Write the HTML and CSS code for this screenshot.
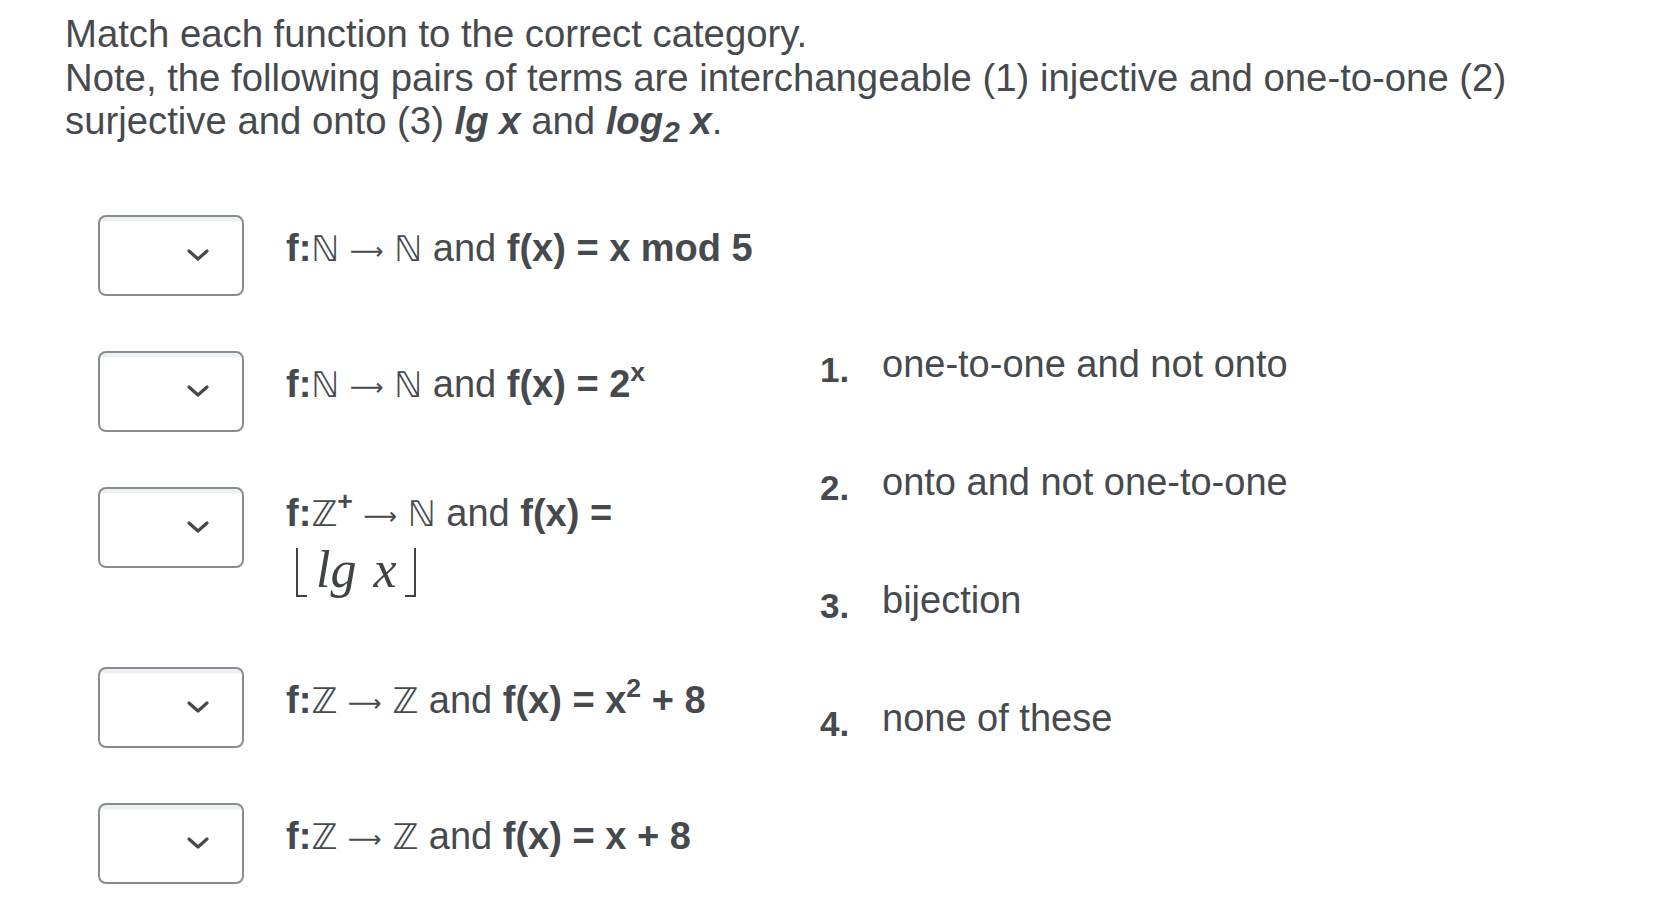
FILE: index.html
```html
<!DOCTYPE html>
<html lang="en">
<head>
<meta charset="utf-8">
<title>Match functions</title>
<link rel="stylesheet" href="styles.css">
</head>
<body>
<div class="page">
  <div class="prompt">
    <p>Match each function to the correct category.</p>
    <p>Note, the following pairs of terms are interchangeable (1) injective and one-to-one (2) surjective and onto (3) <b><i>lg x</i></b> and <b><i>log<sub>2</sub> x</i></b>.</p>
  </div>
  <div class="matching">
    <div class="questions">
      <div class="row">
        <div class="select"><svg class="chev" viewBox="0 0 22 12"><path d="M2 2 L11 10 L20 2" /></svg></div>
        <div class="fn"><b>f:</b><span class="ds">ℕ</span> <span class="arr">⟶</span> <span class="ds">ℕ</span> and <b>f(x) = x mod 5</b></div>
      </div>
      <div class="row">
        <div class="select"><svg class="chev" viewBox="0 0 22 12"><path d="M2 2 L11 10 L20 2" /></svg></div>
        <div class="fn"><b>f:</b><span class="ds">ℕ</span> <span class="arr">⟶</span> <span class="ds">ℕ</span> and <b>f(x) = 2<sup>x</sup></b></div>
      </div>
      <div class="row row-tall">
        <div class="select"><svg class="chev" viewBox="0 0 22 12"><path d="M2 2 L11 10 L20 2" /></svg></div>
        <div class="fn fn-wrap"><b>f:</b><span class="ds">ℤ</span><b class="sup">+</b> <span class="arr">⟶</span> <span class="ds">ℕ</span> and <b>f(x) =</b><br><span class="math"><span class="floor"><span class="expr"><i>lg</i> <i>x</i></span></span></span></div>
      </div>
      <div class="row">
        <div class="select"><svg class="chev" viewBox="0 0 22 12"><path d="M2 2 L11 10 L20 2" /></svg></div>
        <div class="fn"><b>f:</b><span class="ds">ℤ</span> <span class="arr">⟶</span> <span class="ds">ℤ</span> and <b>f(x) = x<sup>2</sup> + 8</b></div>
      </div>
      <div class="row">
        <div class="select"><svg class="chev" viewBox="0 0 22 12"><path d="M2 2 L11 10 L20 2" /></svg></div>
        <div class="fn"><b>f:</b><span class="ds">ℤ</span> <span class="arr">⟶</span> <span class="ds">ℤ</span> and <b>f(x) = x + 8</b></div>
      </div>
    </div>
    <ol class="answers">
      <li><span class="num">1.</span><span>one-to-one and not onto</span></li>
      <li><span class="num">2.</span><span>onto and not one-to-one</span></li>
      <li><span class="num">3.</span><span>bijection</span></li>
      <li><span class="num">4.</span><span>none of these</span></li>
    </ol>
  </div>
</div>
</body>
</html>
```

FILE: styles.css
```css
html, body {
  margin: 0;
  padding: 0;
  background: #ffffff;
}

body {
  font-family: "Liberation Sans", Arial, sans-serif;
  color: #464a4e;
  font-size: 38px;
}

.page {
  padding: 12px 0 0 65px;
}

.prompt p {
  margin: 0;
  line-height: 43.5px;
  max-width: 1460px;
  font-size: 38.3px;
}

.prompt sub {
  font-size: 0.78em;
  vertical-align: -0.28em;
  line-height: 0;
}

.matching {
  display: flex;
  margin-top: 72px;
}

.questions {
  display: flex;
  flex-direction: column;
  gap: 55px;
  margin-left: 33px;
  width: 722px;
}

.row {
  display: flex;
  align-items: flex-start;
  gap: 42px;
}

.row-tall {
  min-height: 125px;
}

.select {
  flex: none;
  width: 146px;
  height: 81px;
  box-sizing: border-box;
  border: 2px solid #898d91;
  border-radius: 8px;
  background: linear-gradient(#eef1f3 0, #eef1f3 4px, #ffffff 5px);
  display: flex;
  align-items: center;
  justify-content: flex-end;
  padding-right: 33px;
}

.chev {
  width: 22px;
  height: 12px;
  fill: none;
  stroke: #45484c;
  stroke-width: 3.2;
  stroke-linecap: round;
  stroke-linejoin: round;
}

.fn {
  padding-top: 12px;
  line-height: 43.5px;
  white-space: nowrap;
}

.fn b {
  font-weight: bold;
}

.fn sup {
  font-size: 0.7em;
  vertical-align: 0.6em;
  line-height: 0;
}

.fn .sup {
  font-size: 0.7em;
  vertical-align: 0.6em;
  line-height: 0;
}

.ds {
  font-family: "DejaVu Sans", sans-serif;
  font-weight: normal;
  font-size: 0.92em;
}

.arr {
  font-family: "DejaVu Sans", sans-serif;
  font-size: 0.62em;
  font-weight: normal;
  vertical-align: 0.08em;
}

.fn-wrap {
  padding-top: 5px;
  white-space: normal;
}

.math {
  display: inline-block;
  font-family: "Liberation Serif", "Times New Roman", serif;
  font-size: 52px;
  line-height: 60px;
  color: #3f4246;
  padding-left: 10px;
  margin-top: 2px;
}

.floor {
  display: inline-flex;
  align-items: baseline;
}

.expr {
  white-space: pre;
  word-spacing: 4px;
}

.floor::before,
.floor::after {
  content: "";
  display: inline-block;
  width: 9px;
  height: 47px;
  border-bottom: 2.5px solid #3f4246;
  align-self: flex-end;
  margin-bottom: 3px;
}

.floor::before {
  border-left: 2.5px solid #3f4246;
  margin-right: 9px;
}

.floor::after {
  border-right: 2.5px solid #3f4246;
  margin-left: 8px;
}

.math i {
  font-style: italic;
}

.answers {
  list-style: none;
  margin: 128px 0 0 0;
  padding: 0;
  display: flex;
  flex-direction: column;
  gap: 74.5px;
}

.answers li {
  display: flex;
  align-items: baseline;
  line-height: 43.5px;
}

.num {
  width: 62px;
  flex: none;
  font-size: 35px;
  font-weight: bold;
  position: relative;
  top: 5px;
}
```
